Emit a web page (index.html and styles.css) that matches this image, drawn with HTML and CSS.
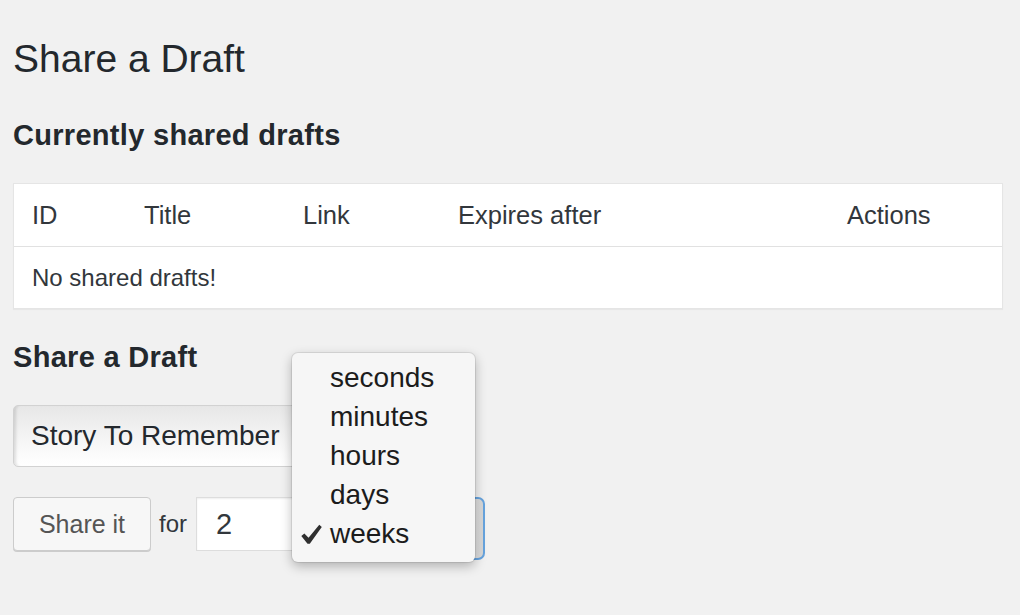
FILE: index.html
```html
<!DOCTYPE html>
<html>
<head>
<meta charset="utf-8">
<link rel="stylesheet" href="styles.css">
</head>
<body>
<div class="wrap">
  <h1 class="title">Share a Draft</h1>
  <h2 class="section">Currently shared drafts</h2>
  <div class="table">
    <div class="row head">
      <div class="cell">ID</div>
      <div class="cell">Title</div>
      <div class="cell">Link</div>
      <div class="cell">Expires after</div>
      <div class="cell">Actions</div>
    </div>
    <div class="row body">
      <div class="cell empty">No shared drafts!</div>
    </div>
  </div>
  <h2 class="section second">Share a Draft</h2>
  <div class="post-select">Story To Remember</div>
  <div class="share-row">
    <button class="btn">Share it</button>
    <span class="for">for</span>
    <div class="amount">2</div>
    <div class="unit"></div>
  </div>
  <div class="menu">
    <div class="item">seconds</div>
    <div class="item">minutes</div>
    <div class="item">hours</div>
    <div class="item">days</div>
    <div class="item checked"><svg class="check" viewBox="0 0 20 20" width="21" height="21"><path d="M0.3 11.4 L3.2 9 L7.2 13.2 L17.4 0.8 L19.8 2.8 L8.4 18.8 L6.2 18.8 Z" fill="#2f2f2f"/></svg>weeks</div>
  </div>
</div>
</body>
</html>
```

FILE: styles.css
```css
html, body {
  margin: 0;
  padding: 0;
  background: #f1f1f1;
}
body {
  font-family: "Liberation Sans", Arial, sans-serif;
  color: #23282d;
  width: 1020px;
  height: 615px;
  overflow: hidden;
}
.wrap {
  position: relative;
  padding: 34px 17px 0 13px;
}
.title {
  margin: 0;
  font-size: 39px;
  line-height: 50px;
  font-weight: 400;
  color: #23282d;
}
.section {
  margin: 33px 0 0;
  font-size: 29px;
  line-height: 36px;
  font-weight: 700;
  letter-spacing: 0.3px;
  color: #23282d;
}
.section.second {
  margin-top: 30px;
}
.table {
  margin-top: 30px;
  width: 988px;
  background: #fff;
  border: 1px solid #e5e5e5;
  box-shadow: 0 1px 1px rgba(0,0,0,0.04);
  color: #32373c;
}
.row {
  display: grid;
  grid-template-columns: 112px 159px 155px 389px 1fr;
}
.row.head {
  border-bottom: 1px solid #e1e1e1;
  font-size: 25.5px;
  line-height: 36px;
}
.row.head .cell {
  padding: 13px 0 13px 18px;
}
.row.body {
  grid-template-columns: 1fr;
  font-size: 24px;
  line-height: 34px;
}
.row.body .cell {
  padding: 14px 0 13px 18px;
}
.post-select {
  margin-top: 30px;
  width: 330px;
  height: 60px;
  box-sizing: content-box;
  border: 1px solid #d2d2d2;
  border-radius: 5px;
  background: linear-gradient(#e7e7e7, #fbfbfb 80%, #fff);
  box-shadow: inset 4px 0 3px -2px rgba(0,0,0,0.12);
  font-size: 28px;
  line-height: 60px;
  padding-left: 17px;
  color: #23282d;
}
.share-row {
  margin-top: 30px;
  display: flex;
  align-items: flex-start;
}
.btn {
  width: 138px;
  height: 54px;
  margin: 0;
  border: 1px solid #cccccc;
  border-radius: 4px;
  background: #f7f7f7;
  box-shadow: 0 1px 0 #cccccc;
  font-family: "Liberation Sans", Arial, sans-serif;
  font-size: 25px;
  color: #555;
  padding: 0;
  line-height: 52px;
}
.for {
  margin-left: 8px;
  font-size: 24px;
  line-height: 54px;
  color: #32373c;
}
.amount {
  margin-left: 9px;
  width: 98px;
  height: 52px;
  background: #fff;
  border: 1px solid #dddddd;
  box-shadow: inset 0 1px 2px rgba(0,0,0,0.07);
  font-size: 29px;
  line-height: 52px;
  padding-left: 19px;
  box-sizing: content-box;
  color: #32373c;
}
.unit {
  margin-left: 4px;
  width: 162px;
  height: 59px;
  border: 2px solid #66a3de;
  border-radius: 7px;
  background: linear-gradient(90deg, #f4f4f4 85%, #d6d6d6);
}
.menu {
  position: absolute;
  left: 292px;
  top: 353px;
  width: 183px;
  padding: 5px 0 9px;
  background: #f6f6f6;
  border-radius: 6px;
  box-shadow: 0 0 0 1px rgba(0,0,0,0.08), 0 4px 12px rgba(0,0,0,0.28);
  font-size: 28px;
  line-height: 39px;
  color: #1c1c1c;
}
.item {
  position: relative;
  padding-left: 38px;
}
.check {
  position: absolute;
  left: 9px;
  top: 10px;
}
```
